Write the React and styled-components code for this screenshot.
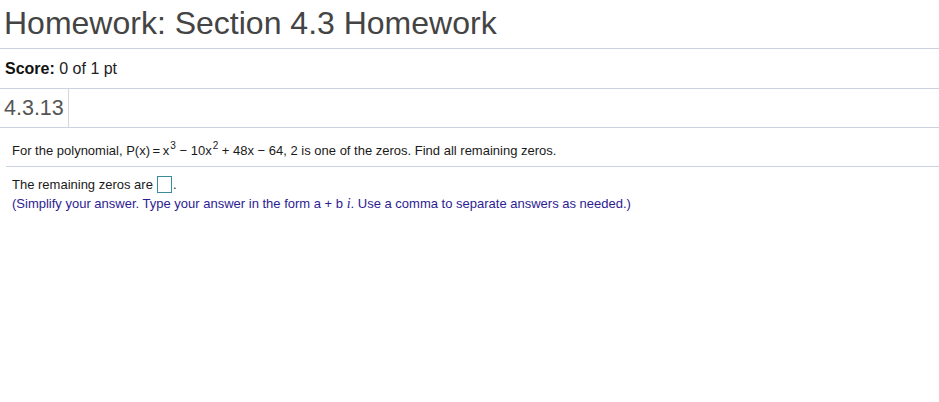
import React from 'react';
import styled, { createGlobalStyle } from 'styled-components';

const GlobalStyle = createGlobalStyle`
  html, body {
    margin: 0;
    padding: 0;
    background: #ffffff;
  }
  body {
    font-family: "Liberation Sans", Arial, sans-serif;
  }
`;

const Page = styled.div`
  width: 939px;
  min-height: 402px;
  background: #fff;
`;

const Title = styled.h1`
  margin: 0;
  padding: 5px 4px 7px;
  font-size: 32px;
  line-height: 36px;
  font-weight: normal;
  color: #444;
  border-bottom: 1px solid #cdd2e2;
`;

const ScoreRow = styled.div`
  padding: 10px 5px 9px;
  font-size: 16px;
  line-height: 20px;
  color: #222;
  border-bottom: 1px solid #cdd2e2;

  b {
    font-weight: bold;
    color: #111;
  }
`;

const NumberRow = styled.div`
  display: flex;
  border-bottom: 1px solid #cdd2e2;
`;

const NumberCell = styled.div`
  width: 60px;
  padding: 6px 4px 6px;
  font-size: 21.5px;
  line-height: 26px;
  color: #555;
  border-right: 1px solid #d6d6d6;
`;

const Question = styled.div`
  padding-left: 6px;
  font-size: 13px;
  line-height: 16px;
  color: #1a1a1a;
`;

const Stem = styled.div`
  padding: 15px 6px 7px;
  border-bottom: 1px solid #cdd2e2;
`;

const Sup = styled.span`
  font-size: 10px;
  line-height: 0;
  position: relative;
  top: -6px;
  margin-left: 1px;
`;

const Answer = styled.div`
  padding: 8px 6px;
  line-height: 19px;
`;

const AnswerBox = styled.span`
  display: inline-block;
  width: 13px;
  height: 15px;
  border: 1.5px solid #3a8c9c;
  vertical-align: -4px;
  margin-left: 4px;
  margin-right: 1px;
`;

const Hint = styled.div`
  color: #2d1c92;
`;

const Italic = styled.i`
  font-family: "Liberation Serif", "Times New Roman", serif;
  font-size: 14px;
`;

export default function App() {
  return (
    <Page>
      <GlobalStyle />
      <Title>Homework: Section 4.3 Homework</Title>
      <ScoreRow>
        <b>Score:</b> 0 of 1 pt
      </ScoreRow>
      <NumberRow>
        <NumberCell>4.3.13</NumberCell>
      </NumberRow>
      <Question>
        <Stem>
          For the polynomial, P(x){'\u2009'}={'\u2009'}x<Sup>3</Sup> − 10x<Sup>2</Sup> + 48x − 64, 2 is one of the zeros. Find all remaining zeros.
        </Stem>
        <Answer>
          <div>
            The remaining zeros are<AnswerBox />.
          </div>
          <Hint>
            (Simplify your answer. Type your answer in the form a + b <Italic>i</Italic>. Use a comma to separate answers as needed.)
          </Hint>
        </Answer>
      </Question>
    </Page>
  );
}
